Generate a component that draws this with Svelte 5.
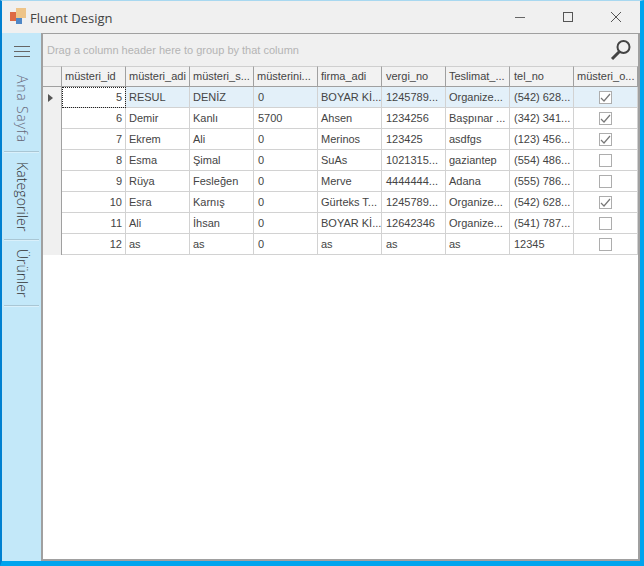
<script>
  const cols = ['müsteri_id','müsteri_adi','müsteri_s...','müsterini...','firma_adi','vergi_no','Teslimat_...','tel_no','müsteri_o...'];
  const rows = [
    [5,'RESUL','DENİZ','0','BOYAR Kİ...','1245789...','Organize...','(542) 628...',true],
    [6,'Demir','Kanlı','5700','Ahsen','1234256','Başpınar ...','(342) 341...',true],
    [7,'Ekrem','Ali','0','Merinos','123425','asdfgs','(123) 456...',true],
    [8,'Esma','Şimal','0','SuAs','1021315...','gaziantep','(554) 486...',false],
    [9,'Rüya','Fesleğen','0','Merve','4444444...','Adana','(555) 786...',false],
    [10,'Esra','Karnış','0','Gürteks T...','1245789...','Organize...','(542) 628...',true],
    [11,'Ali','İhsan','0','BOYAR Kİ...','12642346','Organize...','(541) 787...',false],
    [12,'as','as','0','as','as','as','12345',false]
  ];
</script>

<div class="window">
  <header class="titlebar">
    <svg class="logo" width="17" height="17" viewBox="0 0 17 17">
      <rect x="0" y="4" width="6" height="9" fill="#dd6a45"/>
      <rect x="6" y="0" width="10" height="10" fill="#eec488"/>
      <rect x="6" y="10" width="6" height="6" fill="#4f87c6"/>
    </svg>
    <span class="title">Fluent Design</span>
    <div class="controls">
      <svg width="12" height="12" viewBox="0 0 12 12"><path d="M1 6.5h10" stroke="#666" fill="none"/></svg>
      <svg width="12" height="12" viewBox="0 0 12 12"><rect x="1.5" y="1.5" width="9" height="9" stroke="#555" fill="none"/></svg>
      <svg width="12" height="12" viewBox="0 0 12 12"><path d="M1 1l10 10M11 1L1 11" stroke="#555" fill="none"/></svg>
    </div>
  </header>
  <div class="body">
    <nav class="side">
      <div class="burger"><i></i><i></i><i></i></div>
      <div class="tab first"><span class="muted">Ana Sayfa</span></div>
      <div class="tab second"><span>Kategoriler</span></div>
      <div class="tab third"><span>Ürünler</span></div>
    </nav>
    <main class="main">
      <div class="group">
        <span>Drag a column header here to group by that column</span>
        <svg class="search" width="22" height="22" viewBox="0 0 22 22">
          <circle cx="13.5" cy="8" r="6" stroke="#444" stroke-width="2" fill="none"/>
          <path d="M9.5 12.5 L2 20" stroke="#444" stroke-width="3" fill="none"/>
        </svg>
      </div>
      <div class="grid">
        <div class="hd ind"></div>
        {#each cols as c, j}<div class="hd" class:pad={j === 5 || j === 7}>{c}</div>{/each}
        {#each rows as r, i}
          <div class="ind cell-ind">
            {#if i === 0}<svg width="5" height="8" viewBox="0 0 5 8"><path d="M0 0l5 4-5 4z" fill="#555"/></svg>{/if}
          </div>
          {#each r as v, j}
            <div class="cell" class:pad={j === 3 || j === 5 || j === 7} class:sel={i === 0 && j > 0} class:focus={i === 0 && j === 0} class:num={j === 0} class:center={j === 8}>
              {#if j === 8}
                <span class="check">
                  {#if v}<svg width="11" height="9" viewBox="0 0 11 9"><path d="M1 5l3 3 6-7" stroke="#777" stroke-width="1.2" fill="none"/></svg>{/if}
                </span>
              {:else}{v}{/if}
            </div>
          {/each}
        {/each}
      </div>
    </main>
  </div>
</div>

<style>
  :global(body) { margin: 0; background: #00a8f0; }
  .window {
    width: 644px; height: 566px; box-sizing: border-box;
    border-left: 2px solid #0080d0;
    border-top: 1px solid #a8d8f0;
    border-right: 4px solid #00a4ee;
    border-bottom: 5px solid #00a4ee;
    display: flex; flex-direction: column;
    font-family: "Liberation Sans", Arial, sans-serif;
    overflow: hidden;
    background: #fff;
  }
  .titlebar {
    height: 32px; flex: none; background: #f0f0f0;
    display: flex; align-items: center; padding-left: 8px;
    box-sizing: border-box;
  }
  .logo { margin-top: -2px; }
  .title { font-family: "Open Sans", sans-serif; font-size: 13px; color: #444; margin: 1px 0 0 3px; }
  .controls { margin-left: auto; display: flex; gap: 36px; padding-right: 18px; }
  .body { flex: 1; display: flex; min-height: 0; }
  .side {
    width: 39px; flex: none; background: #c3e8f9;
    border-right: 2px solid #a0a0a0;
    display: flex; flex-direction: column; align-items: stretch;
  }
  .burger { height: 36px; display: flex; flex-direction: column; gap: 4px; padding: 13px 0 0 12px; box-sizing: border-box; flex: none; }
  .burger i { display: block; width: 16px; height: 1px; background: #666; }
  .tab {
    writing-mode: vertical-rl; display: flex; justify-content: flex-start; box-sizing: border-box;
    font-family: "Open Sans", sans-serif; font-size: 14px; font-weight: 300; color: #333;
    margin: 0 2px; border-bottom: 1px solid #a9c6d4; box-shadow: 0 1px 0 #d9f0fb;
    padding-right: 7px; flex: none;
  }
  .tab span { display: block; }
  .first { height: 83px; padding-top: 6px; letter-spacing: 0.8px; }
  .second { height: 88px; padding-top: 10px; letter-spacing: 0.1px; }
  .third { height: 66px; padding-top: 9px; }
  .muted { color: #667; }
  .main { flex: 1; min-width: 0; display: flex; flex-direction: column; background: #fff; border-top: 1px solid #a0a0a0; border-right: 2px solid #a0a0a0; border-bottom: 2px solid #a0a0a0; }
  .group {
    height: 32px; flex: none; background: #f0f0f0; display: flex; align-items: center;
    padding: 0 4px; box-sizing: border-box; font-size: 11px; color: #b4b4b4; justify-content: space-between;
  }
  .search { margin-top: -1px; margin-right: 2px; }
  .grid {
    display: grid;
    grid-template-columns: 19px repeat(8, 64px) 64px;
    grid-auto-rows: 21px;
    font-size: 11px; color: #444;
  }
  .hd {
    background: #f2f2f2; border-right: 1px solid #a0a0a0; border-bottom: 1px solid #a0a0a0; border-top: 1px solid #cfcfcf;
    box-sizing: border-box; padding: 0 3px; line-height: 18px; white-space: nowrap; overflow: hidden; color: #444;
  }
  .hd.ind { border-right: 1px solid #a0a0a0; background: #f0f0f0; }
  .cell-ind { background: #f0f0f0; border-right: 1px solid #a0a0a0; display: flex; align-items: center; justify-content: center; padding-right: 3px; box-sizing: border-box; }
  .cell {
    border-right: 1px solid #d2d2d2; border-bottom: 1px solid #d2d2d2; box-sizing: border-box;
    padding: 0 3px; line-height: 20px; white-space: nowrap; overflow: hidden; background: #fff;
  }
  .pad { padding-left: 4px; padding-right: 0; }
  .sel { background: #e3f0f9; }
  .focus { outline: 1px dotted #222; outline-offset: -1px; }
  .num { text-align: right; }
  .center { display: flex; align-items: center; justify-content: center; }
  .check {
    width: 13px; height: 13px; border: 1px solid #adadad; background: #fff; display: flex; align-items: center; justify-content: center; box-sizing: border-box;
  }
</style>
